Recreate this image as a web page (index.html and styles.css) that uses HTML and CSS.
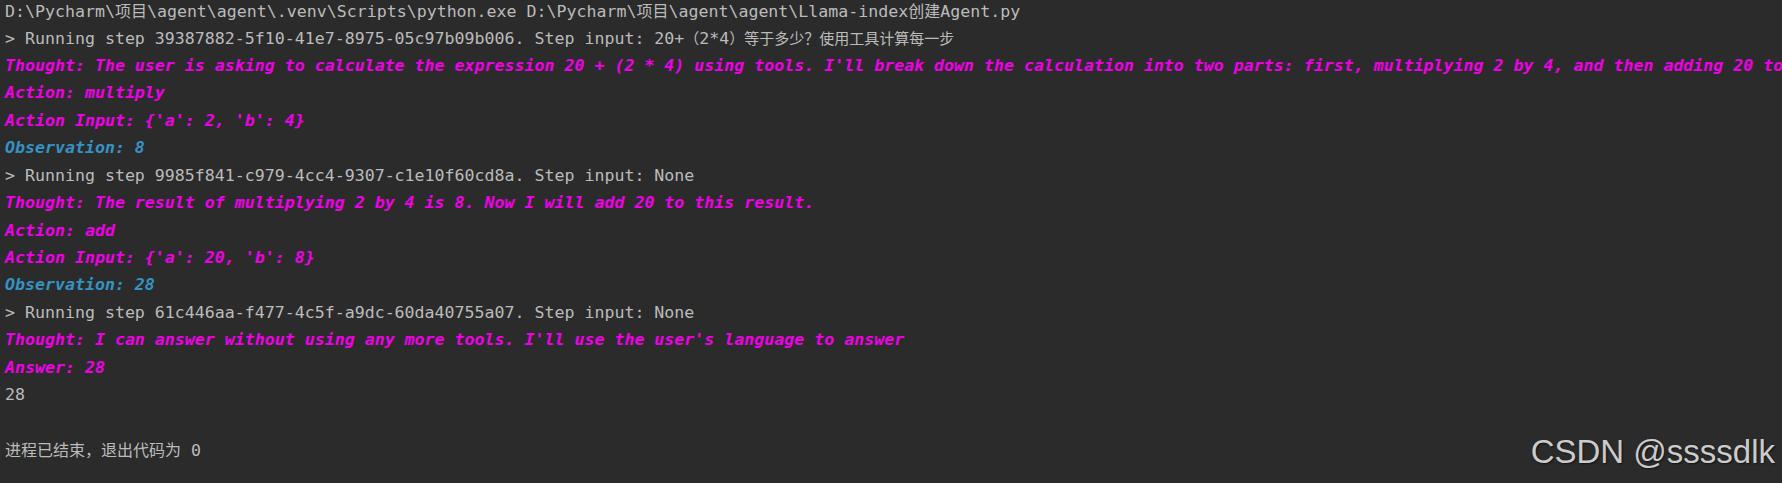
FILE: index.html
```html
<!DOCTYPE html>
<html lang="zh">
<head>
<meta charset="utf-8">
<title>Console</title>
<link rel="stylesheet" href="styles.css">
</head>
<body>
<div class="console">
  <div class="line out">D:\Pycharm\<span class="cjk">项目</span>\agent\agent\.venv\Scripts\python.exe D:\Pycharm\<span class="cjk">项目</span>\agent\agent\Llama-index<span class="cjk">创建</span>Agent.py</div>
  <div class="line out">&gt; Running step 39387882-5f10-41e7-8975-05c97b09b006. Step input: 20+<span class="cjk narrow">（</span>2*4<span class="cjk narrow">）等于多少？使用工具计算每一步</span></div>
  <div class="line agent">Thought: The user is asking to calculate the expression 20 + (2 * 4) using tools. I'll break down the calculation into two parts: first, multiplying 2 by 4, and then adding 20 to</div>
  <div class="line agent">Action: multiply</div>
  <div class="line agent">Action Input: {'a': 2, 'b': 4}</div>
  <div class="line obs">Observation: 8</div>
  <div class="line out">&gt; Running step 9985f841-c979-4cc4-9307-c1e10f60cd8a. Step input: None</div>
  <div class="line agent">Thought: The result of multiplying 2 by 4 is 8. Now I will add 20 to this result.</div>
  <div class="line agent">Action: add</div>
  <div class="line agent">Action Input: {'a': 20, 'b': 8}</div>
  <div class="line obs">Observation: 28</div>
  <div class="line out">&gt; Running step 61c446aa-f477-4c5f-a9dc-60da40755a07. Step input: None</div>
  <div class="line agent">Thought: I can answer without using any more tools. I'll use the user's language to answer</div>
  <div class="line agent">Answer: 28</div>
  <div class="line out">28</div>
  <div class="line out">&nbsp;</div>
  <div class="line out"><span class="cjk">进程已结束，退出代码为</span> 0</div>
</div>
<div class="watermark">CSDN @ssssdlk</div>
</body>
</html>
```

FILE: styles.css
```css
html, body {
  margin: 0;
  padding: 0;
  background: #2b2b2b;
  height: 100%;
  overflow: hidden;
}

body {
  position: relative;
}

.console {
  display: flex;
  flex-direction: column;
  margin-top: -3px;
  padding-left: 5px;
  font-family: "DejaVu Sans Mono", "Liberation Mono", "Noto Sans CJK SC", monospace;
  font-size: 16.6px;
  line-height: 27.44px;
}

.line {
  white-space: pre;
  height: 27.44px;
}

.out {
  color: #bbbbbb;
}

.agent {
  color: #f000e6;
  font-weight: bold;
  font-style: italic;
}

.obs {
  color: #3592c4;
  font-weight: bold;
  font-style: italic;
}

.cjk {
  font-family: "Noto Sans CJK SC", sans-serif;
  font-size: 16px;
}

.cjk.narrow {
  font-size: 15px;
}

.watermark {
  position: absolute;
  right: 7px;
  bottom: 15px;
  font-family: "Liberation Sans", Arial, sans-serif;
  font-size: 33px;
  line-height: 1;
  color: #cbcbcb;
  text-shadow: 1px 1px 2px rgba(0, 0, 0, 0.6);
}
```
